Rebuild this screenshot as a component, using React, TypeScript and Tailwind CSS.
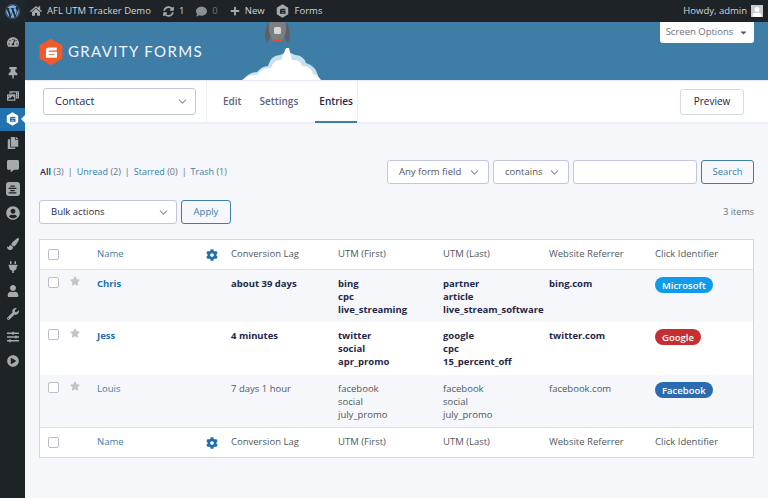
import { ChevronDown } from "lucide-react";
import {
  FaWordpress, FaHome, FaSyncAlt, FaComment, FaPlus, FaTachometerAlt, FaThumbtack, FaPhotoVideo,
  FaCopy, FaCommentAlt, FaUserCircle, FaPaintBrush, FaPlug, FaUser, FaWrench, FaSlidersH,
  FaPlayCircle, FaCog, FaStar, FaCaretDown, FaAlignCenter,
} from "react-icons/fa";

const GfMark = ({ className, fill, glyph }: { className: string; fill: string; glyph: string }) => (
  <svg viewBox="0 0 40 44" className={className}>
    <path d="M20 1 38 11.5v21L20 43 2 32.5v-21z" fill={fill} />
    <path d="M12 28V20q0-5 5-5h12v4.5H17.5q-1 0-1 1v1h13V31H12zM16.500 25v1.500h8.500V25z" fill={glyph} fillRule="evenodd" />
  </svg>
);

const Select = ({ label, className }: { label: string; className: string }) => (
  <div className={`flex items-center justify-between bg-white border border-[#c4c6dc] rounded-[3px] ${className}`}>
    <span>{label}</span>
    <ChevronDown className="w-[13px] h-[13px] text-[#8b8fa8]" />
  </div>
);

const SideItem = ({ icon, className = "" }: { icon: React.ReactNode; className?: string }) => (
  <div className={`h-[23.33px] flex items-center justify-center text-[#a7aaad] text-[12px] ${className}`}>{icon}</div>
);

const Check = () => <div className="w-[11px] h-[11px] bg-white border border-[#bcbdd0] rounded-[2px] ml-[8px]" />;

const grid = "grid grid-cols-[57px_134px_107px_105px_106px_106px_1fr]";

const HeadRow = ({ className = "" }: { className?: string }) => (
  <div className={`${grid} h-[30px] items-center bg-white text-[#50575e] ${className}`}>
    <Check />
    <div className="flex items-center justify-between pr-[13px] text-[#3e7da6]">
      <span>Name</span>
      <FaCog className="w-[12px] h-[12px] text-[#1f6fb0]" />
    </div>
    <span>Conversion Lag</span>
    <span>UTM (First)</span>
    <span>UTM (Last)</span>
    <span>Website Referrer</span>
    <span>Click Identifier</span>
  </div>
);

const entries = [
  { name: "Chris", lag: "about 39 days", first: ["bing", "cpc", "live_streaming"], last: ["partner", "article", "live_stream_software"], ref: "bing.com", tag: "Microsoft", tagBg: "bg-[#0f9bea]", bg: "bg-[#f5f7fb]", bold: true, h: "h-[52px]" },
  { name: "Jess", lag: "4 minutes", first: ["twitter", "social", "apr_promo"], last: ["google", "cpc", "15_percent_off"], ref: "twitter.com", tag: "Google", tagBg: "bg-[#c62f2f]", bg: "bg-white", bold: true, h: "h-[53px]" },
  { name: "Louis", lag: "7 days 1 hour", first: ["facebook", "social", "july_promo"], last: ["facebook", "social", "july_promo"], ref: "facebook.com", tag: "Facebook", tagBg: "bg-[#2b6cb0]", bg: "bg-[#f5f7fb]", bold: false, h: "h-[52px]" },
];

export default function App() {
  return (
    <div className="w-[768px] h-[498px] overflow-hidden flex flex-col bg-[#f5f7fb] text-[9.500px] text-[#242748] font-['Open_Sans','Noto_Sans',sans-serif]">
      {/* admin bar */}
      <div className="h-[22px] shrink-0 bg-[#1d2327] flex items-center text-[#d3d5d7] text-[9.500px]">
        <div className="w-[25px] h-[22px] flex items-center justify-center bg-[#1f272c]">
          <FaWordpress className="w-[15px] h-[15px] text-[#72aee6]" />
        </div>
        <FaHome className="w-[12px] h-[12px] ml-[5px] text-[#a7aaad]" />
        <span className="ml-[5px]">AFL UTM Tracker Demo</span>
        <FaSyncAlt className="w-[11px] h-[11px] ml-[12px] text-[#a7aaad]" />
        <span className="ml-[5px]">1</span>
        <FaComment className="w-[11px] h-[11px] ml-[12px] text-[#8c8f94]" />
        <span className="ml-[5px] text-[#6d7175]">0</span>
        <FaPlus className="w-[10px] h-[10px] ml-[12px] text-[#a7aaad]" />
        <span className="ml-[5px]">New</span>
        <GfMark className="w-[13px] h-[14px] ml-[11px]" fill="#a7aaad" glyph="#1d2327" />
        <span className="ml-[6px]">Forms</span>
        <span className="ml-auto">Howdy, admin</span>
        <div className="w-[12px] h-[12px] ml-[4px] mr-[5px] bg-[#c9cbcd] flex items-end justify-center overflow-hidden">
          <FaUser className="w-[10px] h-[10px] text-white" />
        </div>
      </div>

      <div className="flex flex-1 min-h-0">
        {/* sidebar */}
        <div className="w-[25px] shrink-0 bg-[#1d2327] pt-[8px]">
          <SideItem icon={<FaTachometerAlt />} />
          <SideItem className="mt-[7.700px]" icon={<FaThumbtack />} />
          <SideItem icon={<FaPhotoVideo />} />
          <div className="relative h-[23.33px] bg-[#2271b1] flex items-center justify-center">
            <GfMark className="w-[13px] h-[14px]" fill="#ffffff" glyph="#2271b1" />
            <div className="absolute right-0 top-[7px] border-y-[4px] border-r-[4px] border-y-transparent border-r-[#f5f7fb]" />
          </div>
          <SideItem icon={<FaCopy />} />
          <SideItem icon={<FaCommentAlt />} />
          <SideItem
            icon={
              <div className="w-[14px] h-[14px] rounded-[3px] bg-[#a7aaad] flex items-center justify-center">
                <FaAlignCenter className="w-[9px] h-[9px] text-[#1d2327]" />
              </div>
            }
          />
          <SideItem icon={<FaUserCircle className="w-[14px] h-[14px]" />} />
          <SideItem className="mt-[8px]" icon={<FaPaintBrush />} />
          <SideItem icon={<FaPlug />} />
          <SideItem icon={<FaUser />} />
          <SideItem icon={<FaWrench />} />
          <SideItem icon={<FaSlidersH />} />
          <SideItem icon={<FaPlayCircle />} />
        </div>

        <div className="flex-1 min-w-0 flex flex-col">
          {/* blue header */}
          <div className="relative h-[58px] shrink-0 bg-[#3e7da6] flex justify-between">
            <div className="flex items-center pl-[13px] pt-[1px] h-[58px]">
              <GfMark className="w-[26px] h-[28px]" fill="#f0592b" glyph="#ffffff" />
              <span className="ml-[4px] text-[15px] text-[#f1f5f8] tracking-[1.350px] font-['Lato',sans-serif]">GRAVITY FORMS</span>
            </div>
            <svg viewBox="0 0 90 58" className="absolute left-[215px] top-0 w-[90px] h-[58px]">
              <path d="M3 58q6-8 14-8 5-6 11-6 3-11 12-11 8-5 15 0 8 0 11 8 9 3 11 10 2 3 1 7z" fill="#c5e1f0" />
              <path d="M2 58q8-6 15-5 5-8 14-7 3-9 10-8l5-12h3l3 12q8-1 10 6 9 0 11 8 6 2 8 6z" fill="#ffffff" />
              <path d="M28 0q-3 7-3 14 0 3 2 7l4-6z" fill="#5e6063" />
              <path d="M47 0q3 7 3 14 0 3-2 7l-4-6z" fill="#5e6063" />
              <path d="M30 0h15q2 6 0 13-1 3-2 4H32q-1-1-2-4-2-7 0-13z" fill="#7c7e81" />
              <path d="M32 17h11l-1 2.500h-9z" fill="#e8502a" />
              <rect x="34" y="5" width="7" height="7" rx="1.500" fill="#d5d6d8" />
            </svg>
            <div className="w-[94px] h-[21px] mr-[14px] bg-white rounded-b-[3px] flex items-center justify-center gap-[6px] text-[#6b7080]">
              <span>Screen Options</span>
              <FaCaretDown className="w-[9px] h-[9px] text-[#50575e]" />
            </div>
          </div>

          {/* form nav */}
          <div className="h-[44px] shrink-0 bg-white border-t border-[#e4e8f0] border-b-2 border-b-[#eceff5] flex items-stretch text-[10px]">
            <div className="w-[182px] pl-[18px] pr-[10px] flex items-center border-r border-[#eceef3]">
              <Select label="Contact" className="w-[153px] h-[27px] pl-[11px] pr-[6px] text-[11px]" />
            </div>
            <div className="w-[151px] border-r border-[#eceef3] flex pl-[16px] text-[#5e6480] font-semibold">
              <span className="flex items-center">Edit</span>
              <span className="flex items-center ml-[18px]">Settings</span>
              <span className="flex items-center ml-[17px] px-[4px] -mb-[1px] border-b-2 border-[#3e7da6] text-[#242748]">Entries</span>
            </div>
            <div className="ml-auto mr-[24px] flex items-center">
              <div className="w-[64px] h-[26px] flex items-center justify-center bg-white border border-[#d5d7e3] rounded-[3px]">Preview</div>
            </div>
          </div>

          <div className="pl-[14px] pr-[14px] flex-1">
            {/* filters + search */}
            <div className="mt-[35px] h-[26px] flex items-center justify-between">
              <div className="pl-[1px] text-[9px] text-[#6b7080] flex gap-[4px]">
                <span><b className="font-semibold text-[#242748]">All</b> (3)</span>
                <span>|</span>
                <span><span className="text-[#3e7da6]">Unread</span> (2)</span>
                <span>|</span>
                <span><span className="text-[#3e7da6]">Starred</span> (0)</span>
                <span>|</span>
                <span><span className="text-[#3e7da6]">Trash</span> (1)</span>
              </div>
              <div className="flex items-center gap-[4px] text-[#50575e]">
                <Select label="Any form field" className="w-[102px] h-[24px] pl-[11px] pr-[7px]" />
                <Select label="contains" className="w-[76px] h-[24px] pl-[11px] pr-[7px]" />
                <div className="w-[124px] h-[24px] bg-white border border-[#c4c6dc] rounded-[3px]" />
                <div className="w-[53px] h-[24px] flex items-center justify-center bg-[#f5f7fb] border border-[#3e7da6] rounded-[3px] text-[#3e7da6]">Search</div>
              </div>
            </div>

            {/* bulk actions */}
            <div className="mt-[15px] h-[24px] flex items-center gap-[4px]">
              <Select label="Bulk actions" className="w-[138px] h-[24px] pl-[11px] pr-[6px]" />
              <div className="w-[50px] h-[24px] flex items-center justify-center border border-[#3e7da6] rounded-[3px] text-[#3e7da6]">Apply</div>
              <span className="ml-auto text-[#6b7080] text-[9px]">3 items</span>
            </div>

            {/* entries */}
            <div className="mt-[15px] border border-[#d5d7e0]">
              <HeadRow className="border-b border-[#e1e4ee]" />
              {entries.map((e) => (
                <div key={e.name} className={`${grid} ${e.h} ${e.bg} ${e.bold ? "font-bold" : "text-[#50575e]"} leading-[13px] pt-[7px]`}>
                  <div className="flex items-start gap-[11px]">
                    <Check />
                    <FaStar className="w-[10px] h-[10px] text-[#c3c4c7] -mt-[1px]" />
                  </div>
                  <span className={e.bold ? "text-[#2271b1]" : "text-[#3e7da6]"}>{e.name}</span>
                  <span>{e.lag}</span>
                  <div>{e.first.map((t) => <div key={t}>{t}</div>)}</div>
                  <div>{e.last.map((t) => <div key={t}>{t}</div>)}</div>
                  <span>{e.ref}</span>
                  <div>
                    <span className={`inline-flex items-center h-[16px] px-[7px] rounded-full text-white font-semibold ${e.tagBg}`}>{e.tag}</span>
                  </div>
                </div>
              ))}
              <HeadRow className="border-t border-[#dcdfe9]" />
            </div>
          </div>
        </div>
      </div>
    </div>
  );
}
